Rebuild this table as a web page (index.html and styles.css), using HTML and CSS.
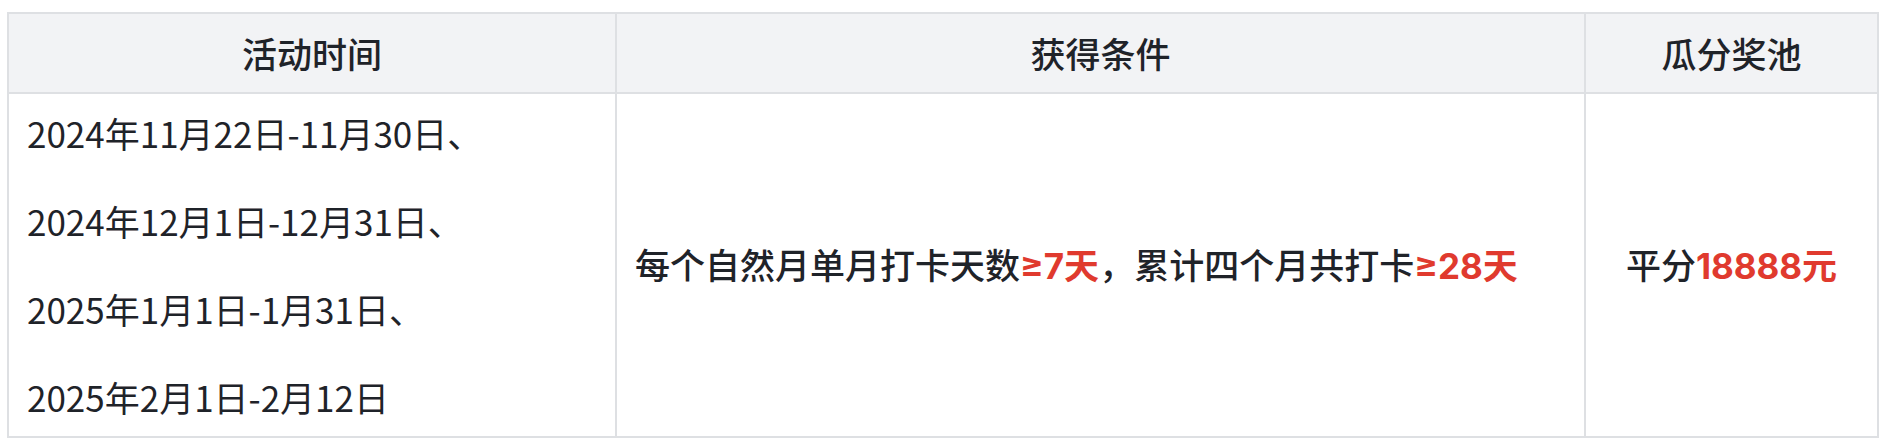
FILE: index.html
```html
<!DOCTYPE html>
<html lang="zh-CN">
<head>
<meta charset="utf-8">
<title>活动规则</title>
<link rel="stylesheet" href="styles.css">
</head>
<body>
<div class="page">
  <table class="rules">
    <colgroup>
      <col class="c1">
      <col class="c2">
      <col class="c3">
    </colgroup>
    <thead>
      <tr>
        <th>活动时间</th>
        <th>获得条件</th>
        <th>瓜分奖池</th>
      </tr>
    </thead>
    <tbody>
      <tr>
        <td class="dates">2024年11月22日-11月30日、<br><br>2024年12月1日-12月31日、<br><br>2025年1月1日-1月31日、<br><br>2025年2月1日-2月12日</td>
        <td class="cond">每个自然月单月打卡天数<span class="hl">≥7天</span>，累计四个月共打卡<span class="hl">≥28天</span></td>
        <td class="pool">平分<span class="hl">18888元</span></td>
      </tr>
    </tbody>
  </table>
</div>
</body>
</html>
```

FILE: styles.css
```css
html, body {
  margin: 0;
  padding: 0;
  background: #ffffff;
}
.page {
  padding: 12px 7px 8px 7px;
  font-family: "Noto Sans CJK SC", "Noto Sans", sans-serif;
  color: #1f2329;
}
.rules {
  width: 1870px;
  border-collapse: collapse;
  table-layout: fixed;
  font-size: 35px;
  line-height: 44px;
}
.c1 { width: 608px; }
.c2 { width: 969px; }
.c3 { width: 293px; }
.rules th,
.rules td {
  border: 2px solid #dee0e3;
  padding: 17px 18px;
  vertical-align: middle;
}
.rules th {
  background: #f2f3f5;
  font-weight: 500;
  text-align: center;
}
.rules td.dates {
  text-align: left;
  font-weight: 400;
}
.rules td.cond {
  text-align: left;
  font-weight: 500;
}
.rules td.pool {
  text-align: center;
  font-weight: 500;
}
.hl {
  font-family: Inter, "Noto Sans CJK SC", sans-serif;
  color: #e03a2e;
  font-weight: 700;
}
```
